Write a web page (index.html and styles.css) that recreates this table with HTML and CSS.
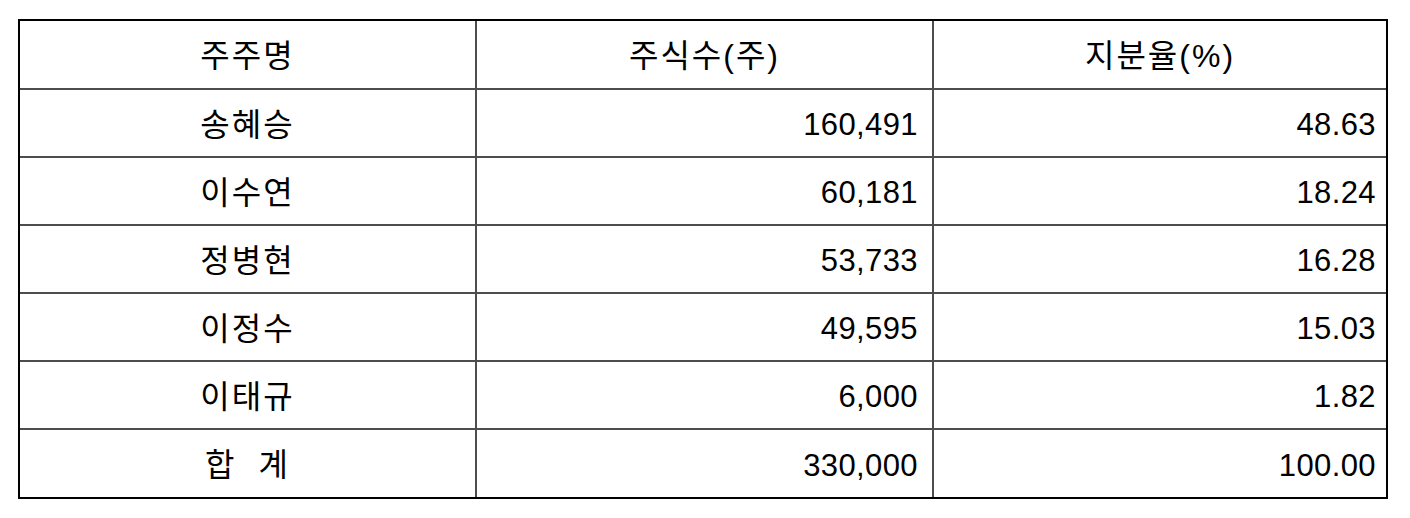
FILE: index.html
```html
<!DOCTYPE html>
<html lang="ko">
<head>
<meta charset="utf-8">
<title>주주현황</title>
<link rel="stylesheet" href="styles.css">
</head>
<body>
<div class="table">
  <div class="cell head c1">주주명</div>
  <div class="cell head c2">주식수(주)</div>
  <div class="cell head c3">지분율(%)</div>

  <div class="cell name c1">송혜승</div>
  <div class="cell num c2">160,491</div>
  <div class="cell num c3">48.63</div>

  <div class="cell name c1">이수연</div>
  <div class="cell num c2">60,181</div>
  <div class="cell num c3">18.24</div>

  <div class="cell name c1">정병현</div>
  <div class="cell num c2">53,733</div>
  <div class="cell num c3">16.28</div>

  <div class="cell name c1">이정수</div>
  <div class="cell num c2">49,595</div>
  <div class="cell num c3">15.03</div>

  <div class="cell name c1">이태규</div>
  <div class="cell num c2">6,000</div>
  <div class="cell num c3">1.82</div>

  <div class="cell name c1 last total">합 계</div>
  <div class="cell num c2 last">330,000</div>
  <div class="cell num c3 last">100.00</div>
</div>
</body>
</html>
```
FILE: styles.css
```css
html, body {
  margin: 0;
  padding: 0;
  background: #ffffff;
}
body {
  padding: 19px 0 0 18px;
  font-family: "Liberation Sans", "Noto Sans CJK KR", sans-serif;
  font-size: 31px;
  color: #000000;
}
.table {
  display: grid;
  grid-template-columns: 457px 457px 452px;
  grid-template-rows: 69px repeat(5, 68px) 67px;
  width: max-content;
  border: 2px solid #000000;
}
.cell {
  display: flex;
  align-items: center;
  padding-top: 3px;
  border-bottom: 2px solid #4d4d4d;
  box-sizing: border-box;
  line-height: 1;
  white-space: nowrap;
}
.cell.last {
  border-bottom: none;
}
.c1, .c2 {
  border-right: 2px solid #4d4d4d;
}
.head, .name {
  justify-content: center;
  font-size: 32px;
  letter-spacing: 2px;
}
.num {
  justify-content: flex-end;
  letter-spacing: 0.4px;
}
.num.c2 {
  padding-right: 14px;
}
.num.c3 {
  padding-right: 10px;
}
.total {
  word-spacing: 11px;
}
```
